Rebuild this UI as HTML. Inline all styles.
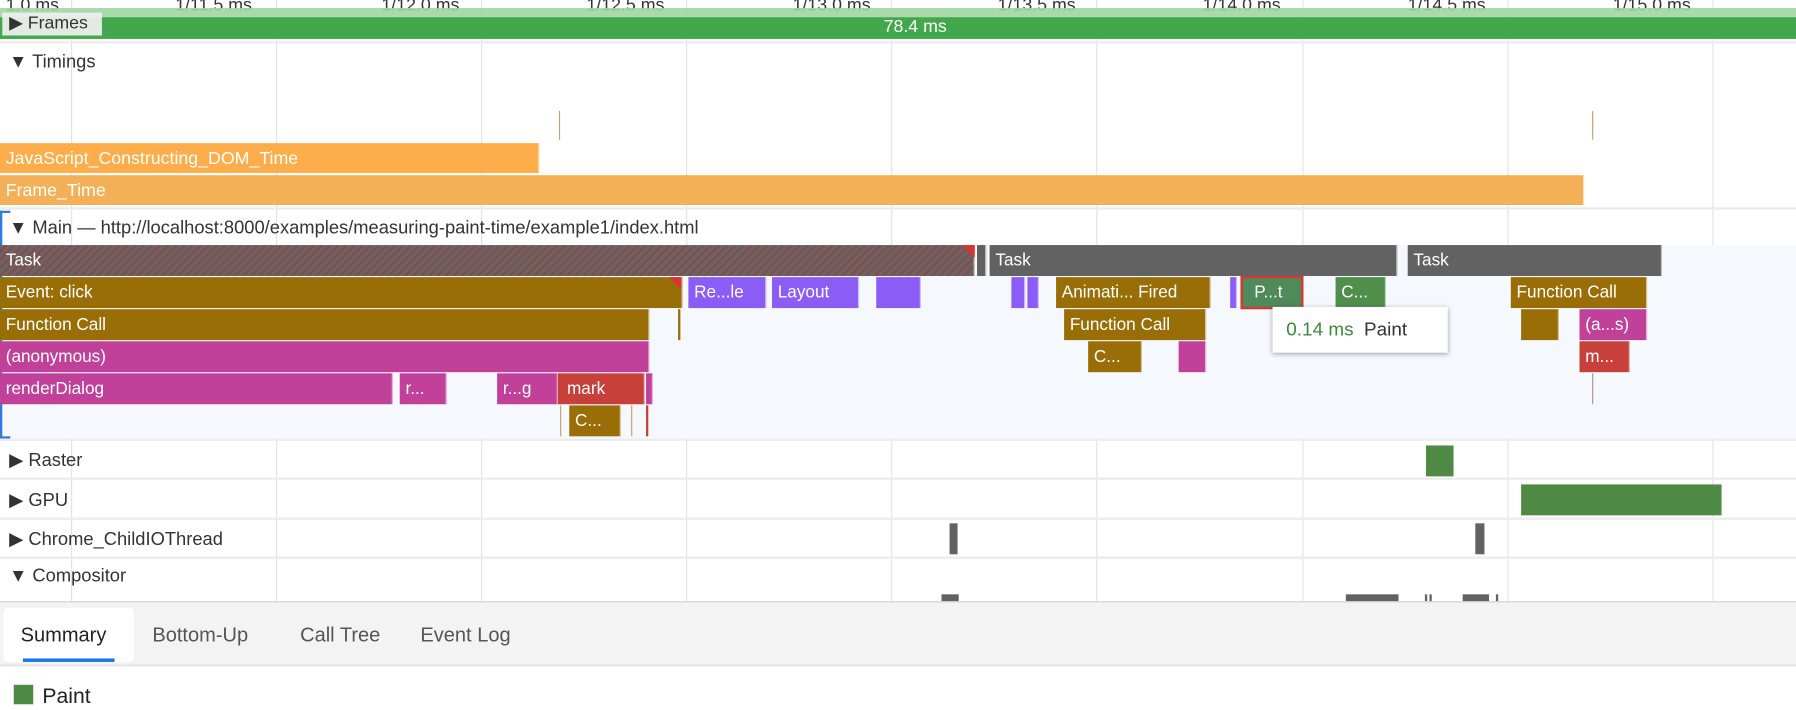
<!DOCTYPE html>
<html><head><meta charset="utf-8"><style>
html,body{margin:0;padding:0;width:1796px;height:710px;overflow:hidden;background:#fff}
#w{position:absolute;left:0;top:0;width:1568px;height:620px;transform:scale(1.14541,1.14516);transform-origin:0 0;font-family:"Liberation Sans",sans-serif;font-size:15px;color:#333}
#w div{position:absolute;box-sizing:border-box}
.g{top:0;width:1px;background:#e3e3e3;height:526px}
.b{height:27px;color:#fff;line-height:27px;padding-left:5px;white-space:nowrap;overflow:hidden;border-right:1px solid rgba(255,255,255,.6)}
.br{background:#9a6e07}.pu{background:#8b5cf6}.mg{background:#c0409a}.rd{background:#c8403a}.gr{background:#4f8f4b}.gy{background:#636262}
.lbl{left:8px;font-size:16px;color:#333}
.sep{left:0;width:1568px;height:2px;background:#ececec}
.tk{top:0;font-size:15.5px;color:#333;white-space:nowrap}
</style></head><body><div id="w">
<div class="g" style="left:62px"></div><div class="g" style="left:241px"></div><div class="g" style="left:420px"></div><div class="g" style="left:599px"></div><div class="g" style="left:778px"></div><div class="g" style="left:957px"></div><div class="g" style="left:1137px"></div><div class="g" style="left:1316px"></div><div class="g" style="left:1495px"></div>
<div class="tk" style="left:5px;top:-4px">1.0 ms</div>
<div class="tk" style="left:153px;top:-4px">1/11.5 ms</div>
<div class="tk" style="left:333px;top:-4px">1/12.0 ms</div>
<div class="tk" style="left:512px;top:-4px">1/12.5 ms</div>
<div class="tk" style="left:692px;top:-4px">1/13.0 ms</div>
<div class="tk" style="left:871px;top:-4px">1/13.5 ms</div>
<div class="tk" style="left:1050px;top:-4px">1/14.0 ms</div>
<div class="tk" style="left:1229px;top:-4px">1/14.5 ms</div>
<div class="tk" style="left:1408px;top:-4px">1/15.0 ms</div>
<div style="left:0;top:7px;width:1568px;height:8px;background:rgba(161,214,163,.9)"></div>
<div style="left:0;top:15px;width:1568px;height:19px;background:#43a84c;color:#fff;text-align:center;line-height:17px;font-size:15.5px;padding-left:30px">78.4 ms</div>
<div style="left:2px;top:11px;width:87px;height:20px;background:rgba(240,240,240,.92);line-height:20px;padding-left:6px;color:#333;font-size:15.5px">▶ Frames</div>
<div class="sep" style="top:36px"></div>
<div class="lbl" style="top:46px">▼ Timings</div>
<div style="left:488px;top:97px;width:1px;height:25px;background:#c8a060"></div>
<div style="left:1390px;top:97px;width:1px;height:25px;background:#c8a060"></div>
<div class="b" style="left:0;top:125px;width:471px;height:26px;background:#fdae4b;font-size:15.5px">JavaScript_Constructing_DOM_Time</div>
<div class="b" style="left:0;top:153px;width:1383px;height:26px;background:#f3b057;font-size:15.5px">Frame_Time</div>
<div class="sep" style="top:181px"></div>
<div class="lbl" style="top:191px">▼ Main — http://localhost:8000/examples/measuring-paint-time/example1/index.html</div>
<div style="left:0;top:214px;width:1568px;height:169px;background:#f5f8fd"></div>
<div style="left:0;top:184px;width:2px;height:199px;background:#2f7be0"></div>
<div style="left:0;top:184px;width:9px;height:2px;background:#2f7be0"></div>
<div style="left:0;top:381px;width:9px;height:2px;background:#2f7be0"></div>
<div class="b gy" style="left:0;top:214px;width:851px;background:repeating-linear-gradient(135deg,#666 0 3px,#8a4a4a 3px 5px)">Task</div>
<div style="left:840px;top:214px;width:0;height:0;border-left:11px solid transparent;border-top:11px solid #d33"></div>
<div class="b gy" style="left:853px;top:214px;width:8px"></div>
<div class="b gy" style="left:864px;top:214px;width:356px">Task</div>
<div class="b gy" style="left:1229px;top:214px;width:222px">Task</div>
<div class="b br" style="left:0;top:242px;width:596px">Event: click</div>
<div style="left:584px;top:242px;width:0;height:0;border-left:11px solid transparent;border-top:11px solid #d33"></div>
<div class="b pu" style="left:601px;top:242px;width:68px">Re...le</div>
<div class="b pu" style="left:674px;top:242px;width:76px">Layout</div>
<div class="b pu" style="left:765px;top:242px;width:39px"></div>
<div class="b pu" style="left:883px;top:242px;width:12px"></div>
<div class="b pu" style="left:897px;top:242px;width:10px"></div>
<div class="b br" style="left:922px;top:242px;width:135px">Animati... Fired</div>
<div class="b pu" style="left:1074px;top:242px;width:6px"></div>
<div class="b" style="left:1083px;top:241px;width:55px;height:29px;background:#4e8a5a;border:2px solid #d33;line-height:25px;padding-left:10px">P...t</div>
<div class="b gr" style="left:1166px;top:242px;width:44px">C...</div>
<div class="b br" style="left:1319px;top:242px;width:119px">Function Call</div>
<div class="b br" style="left:0;top:270px;width:567px">Function Call</div>
<div style="left:592px;top:270px;width:2px;height:27px;background:#9a6e07"></div>
<div class="b br" style="left:929px;top:270px;width:124px">Function Call</div>
<div class="b br" style="left:1328px;top:270px;width:33px"></div>
<div class="b mg" style="left:1379px;top:270px;width:59px">(a...s)</div>
<div class="b mg" style="left:0;top:298px;width:567px">(anonymous)</div>
<div class="b br" style="left:950px;top:298px;width:47px">C...</div>
<div class="b mg" style="left:1029px;top:298px;width:24px"></div>
<div class="b rd" style="left:1379px;top:298px;width:44px">m...</div>
<div class="b mg" style="left:0;top:326px;width:343px">renderDialog</div>
<div class="b mg" style="left:349px;top:326px;width:41px">r...</div>
<div class="b mg" style="left:434px;top:326px;width:53px">r...g</div>
<div class="b rd" style="left:487px;top:326px;width:76px;padding-left:8px">mark</div>
<div class="b mg" style="left:564px;top:326px;width:3px"></div>
<div style="left:1390px;top:326px;width:1px;height:27px;background:#b09090"></div>
<div style="left:489px;top:354px;width:1px;height:27px;background:#c8a060"></div>
<div class="b br" style="left:497px;top:354px;width:45px">C...</div>
<div style="left:551px;top:354px;width:1px;height:27px;background:#c8a060"></div>
<div style="left:564px;top:354px;width:2px;height:27px;background:#c8403a"></div>
<div style="left:1111px;top:268px;width:153px;height:40px;background:#fff;box-shadow:0 1px 4px rgba(0,0,0,.35);line-height:40px;padding-left:12px;white-space:nowrap;font-size:16.5px"><span style="color:#3a8a3e">0.14 ms</span>&nbsp; Paint</div>
<div class="sep" style="top:383px"></div>
<div class="lbl" style="top:392px">▶ Raster</div>
<div style="left:1245px;top:389px;width:24px;height:27px;background:#4e8a44"></div>
<div class="sep" style="top:417px"></div>
<div class="lbl" style="top:427px">▶ GPU</div>
<div style="left:1328px;top:423px;width:175px;height:27px;background:#4e8a44"></div>
<div class="sep" style="top:452px"></div>
<div class="lbl" style="top:461px">▶ Chrome_ChildIOThread</div>
<div style="left:829px;top:457px;width:7px;height:27px;background:#636262"></div>
<div style="left:1288px;top:457px;width:8px;height:27px;background:#636262"></div>
<div class="sep" style="top:486px"></div>
<div class="lbl" style="top:495px">▼ Compositor</div>
<div style="left:822px;top:519px;width:15px;height:7px;background:#636262"></div>
<div style="left:1175px;top:519px;width:46px;height:7px;background:#636262"></div>
<div style="left:1244px;top:519px;width:2px;height:7px;background:#636262"></div>
<div style="left:1248px;top:519px;width:2px;height:7px;background:#636262"></div>
<div style="left:1277px;top:519px;width:23px;height:7px;background:#636262"></div>
<div style="left:1306px;top:519px;width:2px;height:7px;background:#636262"></div>
<div style="left:0;top:525px;width:1568px;height:55px;background:#f3f3f3;border-top:1px solid #d0d0d0"></div>
<div style="left:3px;top:531px;width:114px;height:47px;background:#fff;border-radius:3px"></div>
<div style="left:20px;top:575px;width:80px;height:3px;background:#1a73e8"></div>
<div style="left:18px;top:544px;font-size:17.5px;color:#222">Summary</div>
<div style="left:133px;top:544px;font-size:17.5px;color:#555">Bottom-Up</div>
<div style="left:262px;top:544px;font-size:17.5px;color:#555">Call Tree</div>
<div style="left:367px;top:544px;font-size:17.5px;color:#555">Event Log</div>
<div style="left:0;top:580px;width:1568px;height:2px;background:#e6e6e6"></div>
<div style="left:12px;top:598px;width:17px;height:17px;background:#4e8a44"></div>
<div style="left:37px;top:597px;font-size:18.5px;color:#222">Paint</div>
</div></body></html>
